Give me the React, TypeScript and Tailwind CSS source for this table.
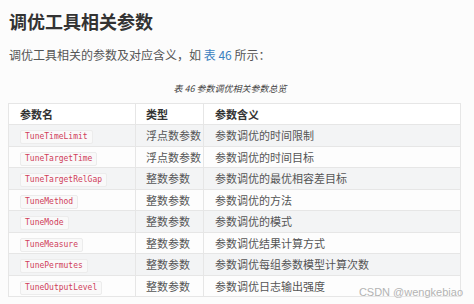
import React from 'react';

const rows = [
  { name: 'TuneTimeLimit', type: '浮点数参数', desc: '参数调优的时间限制' },
  { name: 'TuneTargetTime', type: '浮点数参数', desc: '参数调优的时间目标' },
  { name: 'TuneTargetRelGap', type: '整数参数', desc: '参数调优的最优相容差目标' },
  { name: 'TuneMethod', type: '整数参数', desc: '参数调优的方法' },
  { name: 'TuneMode', type: '整数参数', desc: '参数调优的模式' },
  { name: 'TuneMeasure', type: '整数参数', desc: '参数调优结果计算方式' },
  { name: 'TunePermutes', type: '整数参数', desc: '参数调优每组参数模型计算次数' },
  { name: 'TuneOutputLevel', type: '整数参数', desc: '参数调优日志输出强度' },
];

const sans = "font-['Noto_Sans_CJK_SC','Noto_Sans',sans-serif]";

export default function App() {
  return (
    <div className={`relative w-[474px] h-[304px] overflow-hidden bg-[#fcfcfc] ${sans}`}>
      <div className="pl-[9px] pr-[13px] pt-[8px]">
        <h1 className="text-[18px] leading-[26px] font-bold text-[#333]">调优工具相关参数</h1>
        <p className="mt-[12px] text-[12px] leading-[18px] text-[#555]">
          调优工具相关的参数及对应含义，如 <span className="text-[#3a7fc0]">表 46</span> 所示：
        </p>
        <div className="mt-[18px] pr-[10px] text-center text-[9px] leading-[14px] italic text-[#444]">
          表 46 参数调优相关参数总览
        </div>
        <table className="mt-[7px] ml-[-1px] w-[453px] table-fixed border-collapse text-[11px] text-[#555]">
          <thead>
            <tr className="h-[21px] bg-white">
              <th className="w-[127px] border border-[#e6e6e6] pl-[11px] text-left font-bold text-[#333]">参数名</th>
              <th className="w-[68px] border border-[#e6e6e6] pl-[10px] text-left font-bold text-[#333]">类型</th>
              <th className="border border-[#e6e6e6] pl-[11px] text-left font-bold text-[#333]">参数含义</th>
            </tr>
          </thead>
          <tbody>
            {rows.map((r, i) => (
              <tr key={r.name} className={`h-[21.5px] ${i % 2 === 0 ? 'bg-[#f3f4f5]' : 'bg-[#fdfdfd]'}`}>
                <td className="border border-[#e6e6e6] pl-[11px]">
                  <span className="inline-block rounded-[2px] border border-[#ececec] bg-[#f9f9f9] px-[4px] text-[8px] leading-[12px] text-[#d0405a] font-['DejaVu_Sans_Mono',monospace]">
                    {r.name}
                  </span>
                </td>
                <td className="border border-[#e6e6e6] pl-[10px]">{r.type}</td>
                <td className="border border-[#e6e6e6] pl-[11px]">{r.desc}</td>
              </tr>
            ))}
          </tbody>
        </table>
      </div>
      <div className="absolute right-[11px] bottom-[4px] text-[11px] text-[#b3b3b3] font-['Liberation_Sans',sans-serif] [text-shadow:0_0_1px_#fff]">
        CSDN @wengkebiao
      </div>
    </div>
  );
}
